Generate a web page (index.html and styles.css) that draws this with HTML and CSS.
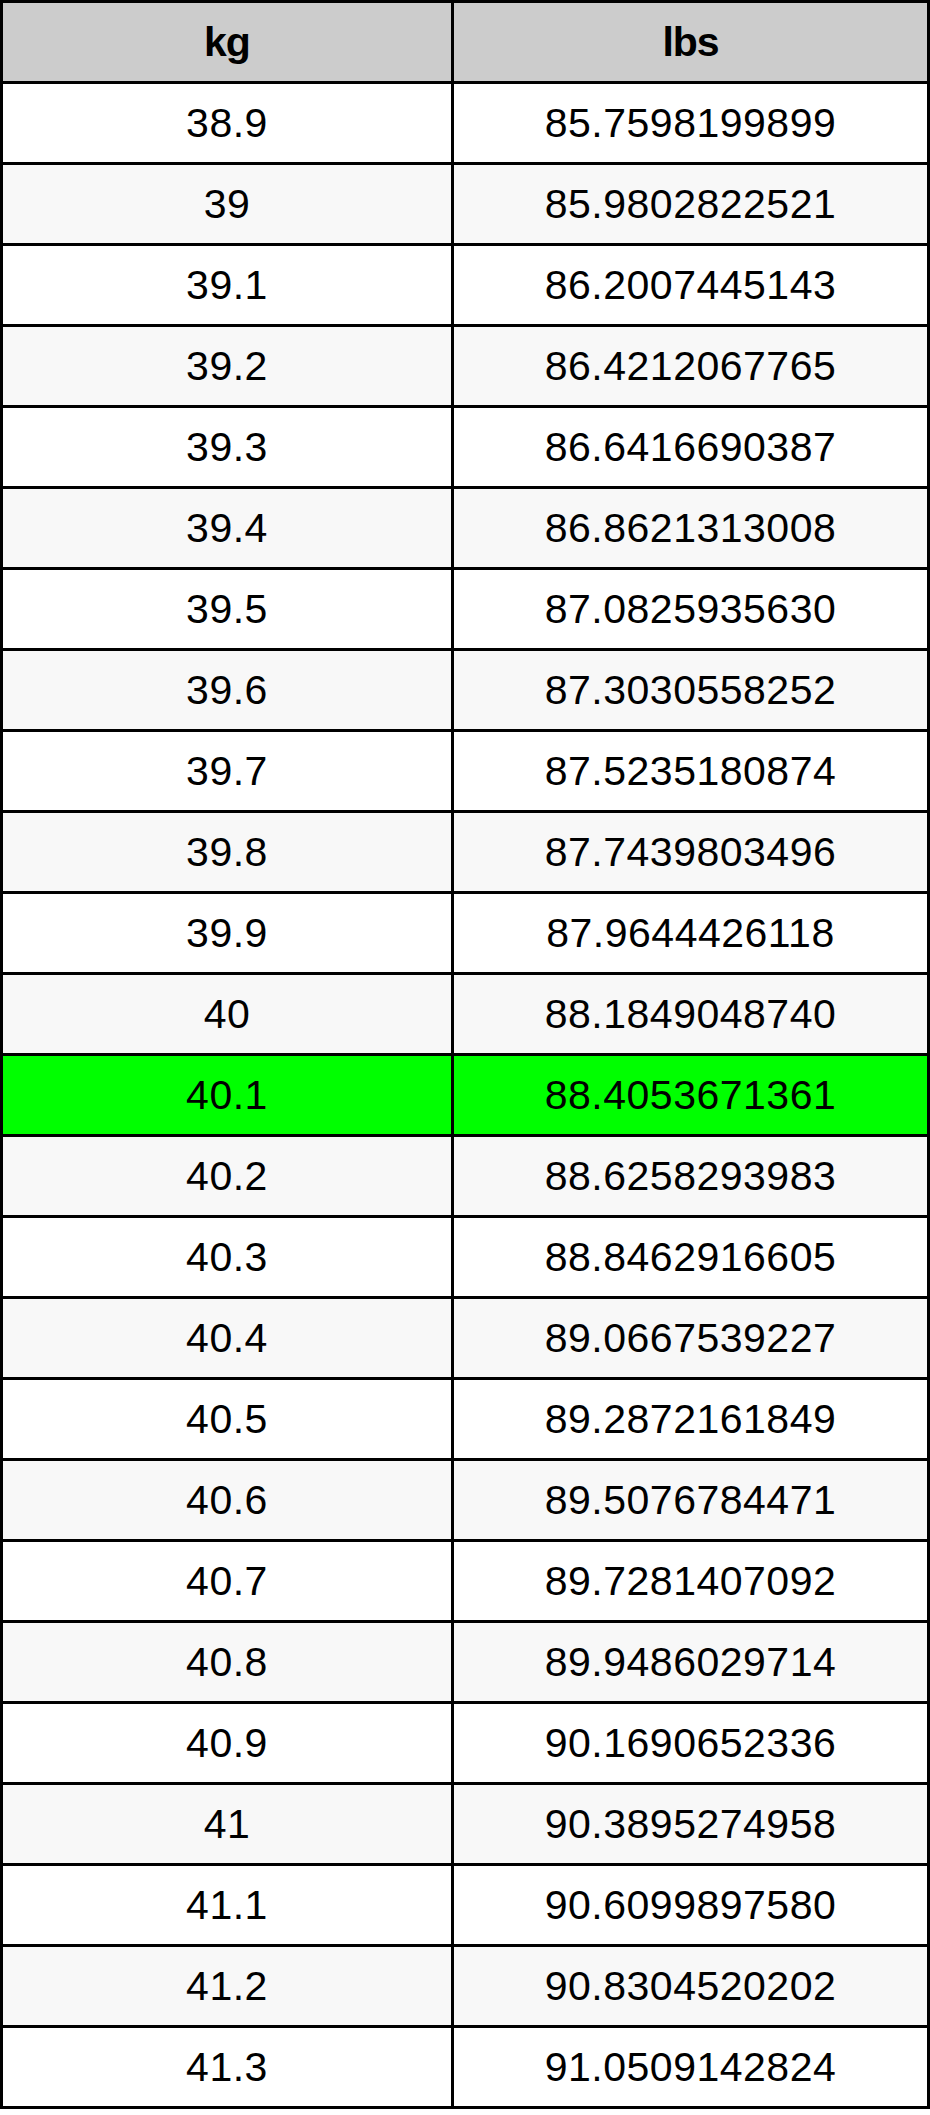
FILE: index.html
```html
<!DOCTYPE html>
<html>
<head>
<meta charset="utf-8">
<title>kg to lbs</title>
<link rel="stylesheet" href="styles.css">
</head>
<body>
<table class="conv">
<colgroup><col class="c-kg"><col class="c-lbs"></colgroup>
<thead>
<tr><th>kg</th><th>lbs</th></tr>
</thead>
<tbody>
<tr><td>38.9</td><td>85.7598199899</td></tr>
<tr><td>39</td><td>85.9802822521</td></tr>
<tr><td>39.1</td><td>86.2007445143</td></tr>
<tr><td>39.2</td><td>86.4212067765</td></tr>
<tr><td>39.3</td><td>86.6416690387</td></tr>
<tr><td>39.4</td><td>86.8621313008</td></tr>
<tr><td>39.5</td><td>87.0825935630</td></tr>
<tr><td>39.6</td><td>87.3030558252</td></tr>
<tr><td>39.7</td><td>87.5235180874</td></tr>
<tr><td>39.8</td><td>87.7439803496</td></tr>
<tr><td>39.9</td><td>87.9644426118</td></tr>
<tr><td>40</td><td>88.1849048740</td></tr>
<tr class="hl"><td>40.1</td><td>88.4053671361</td></tr>
<tr><td>40.2</td><td>88.6258293983</td></tr>
<tr><td>40.3</td><td>88.8462916605</td></tr>
<tr><td>40.4</td><td>89.0667539227</td></tr>
<tr><td>40.5</td><td>89.2872161849</td></tr>
<tr><td>40.6</td><td>89.5076784471</td></tr>
<tr><td>40.7</td><td>89.7281407092</td></tr>
<tr><td>40.8</td><td>89.9486029714</td></tr>
<tr><td>40.9</td><td>90.1690652336</td></tr>
<tr><td>41</td><td>90.3895274958</td></tr>
<tr><td>41.1</td><td>90.6099897580</td></tr>
<tr><td>41.2</td><td>90.8304520202</td></tr>
<tr><td>41.3</td><td>91.0509142824</td></tr>
</tbody>
</table>
</body>
</html>
```

FILE: styles.css
```css
html, body {
  margin: 0;
  padding: 0;
  background: #ffffff;
}

.conv {
  width: 930px;
  border-collapse: separate;
  border-spacing: 3px;
  background: #000000;
  table-layout: fixed;
  font-family: "Liberation Sans", Arial, Helvetica, sans-serif;
  font-size: 41px;
  color: #000000;
}

.c-kg { width: 448px; }
.c-lbs { width: 473px; }

.conv th,
.conv td {
  height: 78px;
  padding: 0;
  text-align: center;
  vertical-align: middle;
  line-height: normal;
}

.conv td {
  letter-spacing: 0.5px;
}

.conv th {
  background: #cccccc;
  font-weight: bold;
  letter-spacing: -1px;
}

.conv tbody tr:nth-child(odd) td { background: #ffffff; }
.conv tbody tr:nth-child(even) td { background: #f8f8f8; }
.conv tbody tr.hl td { background: #00ff00; }
```
